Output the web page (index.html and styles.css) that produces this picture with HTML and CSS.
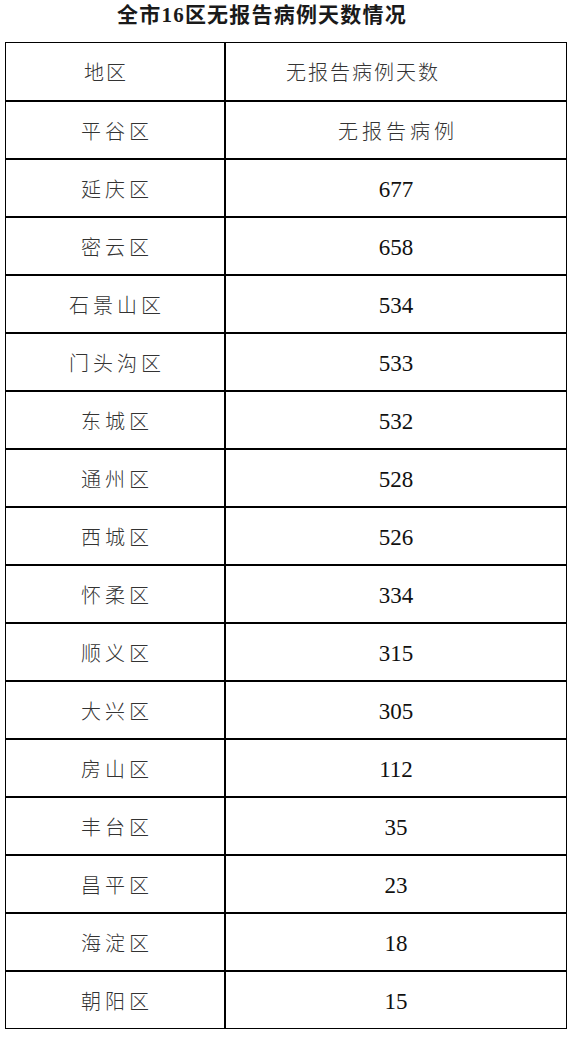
FILE: index.html
```html
<!DOCTYPE html>
<html lang="zh-CN">
<head>
<meta charset="utf-8">
<title>全市16区无报告病例天数情况</title>
<link rel="stylesheet" href="styles.css">
</head>
<body>
<div class="page">
  <h1 class="title">全市<span class="num">16</span>区无报告病例天数情况</h1>
  <div class="grid">
    <div class="cell head head-a">地区</div><div class="cell head head-b">无报告病例天数</div>
    <div class="cell">平谷区</div><div class="cell">无报告病例</div>
    <div class="cell">延庆区</div><div class="cell num">677</div>
    <div class="cell">密云区</div><div class="cell num">658</div>
    <div class="cell">石景山区</div><div class="cell num">534</div>
    <div class="cell">门头沟区</div><div class="cell num">533</div>
    <div class="cell">东城区</div><div class="cell num">532</div>
    <div class="cell">通州区</div><div class="cell num">528</div>
    <div class="cell">西城区</div><div class="cell num">526</div>
    <div class="cell">怀柔区</div><div class="cell num">334</div>
    <div class="cell">顺义区</div><div class="cell num">315</div>
    <div class="cell">大兴区</div><div class="cell num">305</div>
    <div class="cell">房山区</div><div class="cell num">112</div>
    <div class="cell">丰台区</div><div class="cell num">35</div>
    <div class="cell">昌平区</div><div class="cell num">23</div>
    <div class="cell">海淀区</div><div class="cell num">18</div>
    <div class="cell">朝阳区</div><div class="cell num">15</div>
  </div>
</div>
</body>
</html>
```
FILE: styles.css
```css
html, body {
  margin: 0;
  padding: 0;
  background: #fff;
}
.page {
  padding: 0 5px;
  font-family: "Noto Sans CJK SC", "Liberation Serif", serif;
  color: #333;
}
.title {
  margin: 0 0 14px;
  padding-right: 48px;
  height: 28px;
  line-height: 26px;
  font-size: 21px;
  font-weight: bold;
  text-align: center;
  color: #1a1a1a;
  letter-spacing: 1.2px;
  white-space: nowrap;
}
.title .num {
  font-family: "Liberation Serif", serif;
  font-weight: bold;
}
.grid {
  display: grid;
  grid-template-columns: 218px 340px;
  grid-template-rows: 57px;
  grid-auto-rows: 56px;
  gap: 2px;
  background: #000;
  border: 1px solid #000;
}
.cell {
  background: #fff;
  display: flex;
  align-items: center;
  justify-content: center;
  font-size: 20px;
  font-weight: 300;
  letter-spacing: 4px;
  padding-left: 4px;
  color: #333;
}
.cell.head {
  letter-spacing: 2px;
  padding-left: 2px;
}
.cell.head-a {
  padding-right: 20px;
}
.cell.head-b {
  padding-right: 68px;
}
.cell.num {
  font-family: "Liberation Serif", serif;
  font-weight: normal;
  font-size: 23px;
  letter-spacing: 0;
  padding-left: 0;
  padding-top: 4px;
  color: #111;
}
```
